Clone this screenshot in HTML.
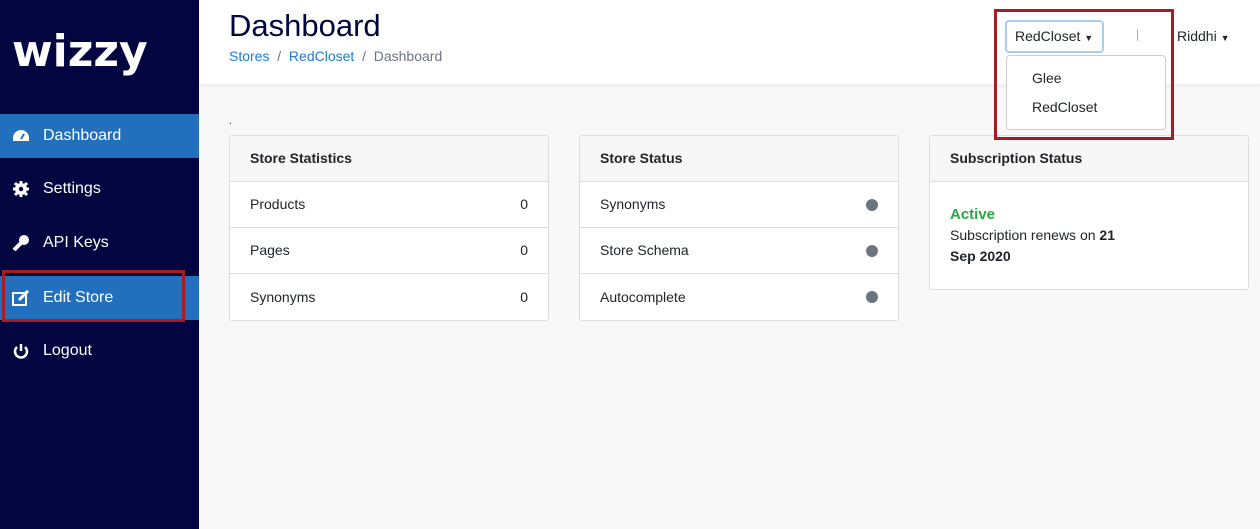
<!DOCTYPE html>
<html><head><style>
*{box-sizing:border-box;margin:0;padding:0}
body{width:1260px;height:529px;overflow:hidden;background:#f8f8f8;font-family:"Liberation Sans",sans-serif;position:relative;color:#212529}
.sb{position:absolute;left:0;top:0;width:199px;height:529px;background:#02053f}
.logo{position:absolute;left:12px;top:26px;color:#fff;font-size:44px;font-weight:bold;letter-spacing:0px;font-family:"DejaVu Sans",sans-serif}
.nav{position:absolute;left:0;width:199px;height:44px;color:#fff;font-size:16px;line-height:44px;padding-left:43px}
.nav.act{background:#2270bd}
.ic{position:absolute;left:12px;top:14px;width:18px;height:16px}
.hdr{position:absolute;left:199px;top:0;right:0;height:84px;background:#fff;box-shadow:0 2px 4px rgba(0,0,0,.06)}
h1{position:absolute;left:229px;top:8px;font-size:31px;font-weight:normal;color:#02053f}
.bc{position:absolute;left:229px;top:48px;font-size:14px;color:#6c757d}
.bc a{color:#1f7ad6}
.card{position:absolute;top:135px;width:320px;background:#fff;border:1px solid #ddd;border-radius:3px;font-size:14px}
.ch{height:46px;line-height:45px;padding-left:20px;font-weight:bold;background:#f7f7f7;border-bottom:1px solid #ddd}
.row{height:46px;line-height:45px;padding:0 20px;border-bottom:1px solid #ddd;display:flex;justify-content:space-between;align-items:center}
.row:last-child{border-bottom:none}
.dot{width:12px;height:12px;border-radius:50%;background:#6c757d}
.red{position:absolute;border:3px solid #a51c24}
</style></head><body>
<div class="sb">
<div class="logo">wizzy</div>
<div class="nav act" style="top:114px"><svg class="ic" viewBox="0 0 18 16"><path d="M9 2a8 8 0 0 0-8 8v3h16v-3a8 8 0 0 0-8-8z" fill="#fff"/><path d="M9 11l3-5" stroke="#2270bd" stroke-width="2"/></svg>Dashboard</div>
<div class="nav" style="top:167px"><svg class="ic" viewBox="0 0 18 16"><circle cx="9" cy="8" r="6" fill="#fff"/><path d="M9 0v16M1 8h16M3 2l12 12M15 2L3 14" stroke="#fff" stroke-width="3"/><circle cx="9" cy="8" r="2.2" fill="#02053f"/></svg>Settings</div>
<div class="nav" style="top:221px"><svg class="ic" viewBox="0 0 18 16"><circle cx="12" cy="5" r="5" fill="#fff"/><path d="M9 8l-7 7" stroke="#fff" stroke-width="4"/></svg>API Keys</div>
<div class="nav act" style="top:276px"><svg class="ic" viewBox="0 0 18 16"><rect x="1" y="3" width="13" height="12" fill="none" stroke="#fff" stroke-width="2"/><path d="M7 10l9-9" stroke="#fff" stroke-width="3"/></svg>Edit Store</div>
<div class="nav" style="top:329px"><svg class="ic" viewBox="0 0 18 16"><path d="M5 4a6 6 0 1 0 8 0" fill="none" stroke="#fff" stroke-width="2.5"/><path d="M9 1v7" stroke="#fff" stroke-width="2.5"/></svg>Logout</div>
</div>
<div class="hdr"></div>
<h1>Dashboard</h1>
<div class="bc"><a>Stores</a> &nbsp;/&nbsp; <a>RedCloset</a> &nbsp;/&nbsp; Dashboard</div>
<div style="position:absolute;left:1005px;top:20px;width:99px;height:33px;border:2px solid #a9cdf3;border-radius:4px;background:#fff;font-size:14px;line-height:29px;padding-left:8px">RedCloset <span style="font-size:9px">▼</span></div>
<div style="position:absolute;left:1137px;top:29px;width:1px;height:12px;background:#aaa"></div>
<div style="position:absolute;left:1177px;top:28px;font-size:14px">Riddhi <span style="font-size:9px">▼</span></div>
<div style="position:absolute;left:229px;top:116px;font-size:10px">.</div>
<div class="card" style="left:229px"><div class="ch">Store Statistics</div><div class="row"><span>Products</span><span>0</span></div><div class="row"><span>Pages</span><span>0</span></div><div class="row"><span>Synonyms</span><span>0</span></div></div>
<div class="card" style="left:579px"><div class="ch">Store Status</div><div class="row"><span>Synonyms</span><span class="dot"></span></div><div class="row"><span>Store Schema</span><span class="dot"></span></div><div class="row"><span>Autocomplete</span><span class="dot"></span></div></div>
<div class="card" style="left:929px;height:155px"><div class="ch">Subscription Status</div>
<div style="padding:22px 20px;line-height:21px"><div style="color:#28a745;font-weight:bold;font-size:15px">Active</div>Subscription renews on <b>21<br>Sep 2020</b></div></div>
<div style="position:absolute;left:1006px;top:55px;width:160px;height:75px;background:#fff;border:1px solid #ccc;border-radius:4px;font-size:14px">
<div style="position:absolute;left:25px;top:14px">Glee</div><div style="position:absolute;left:25px;top:43px">RedCloset</div></div>
<div class="red" style="left:994px;top:9px;width:180px;height:131px"></div>
<div class="red" style="left:2px;top:270px;width:183px;height:52px"></div>
</body></html>
